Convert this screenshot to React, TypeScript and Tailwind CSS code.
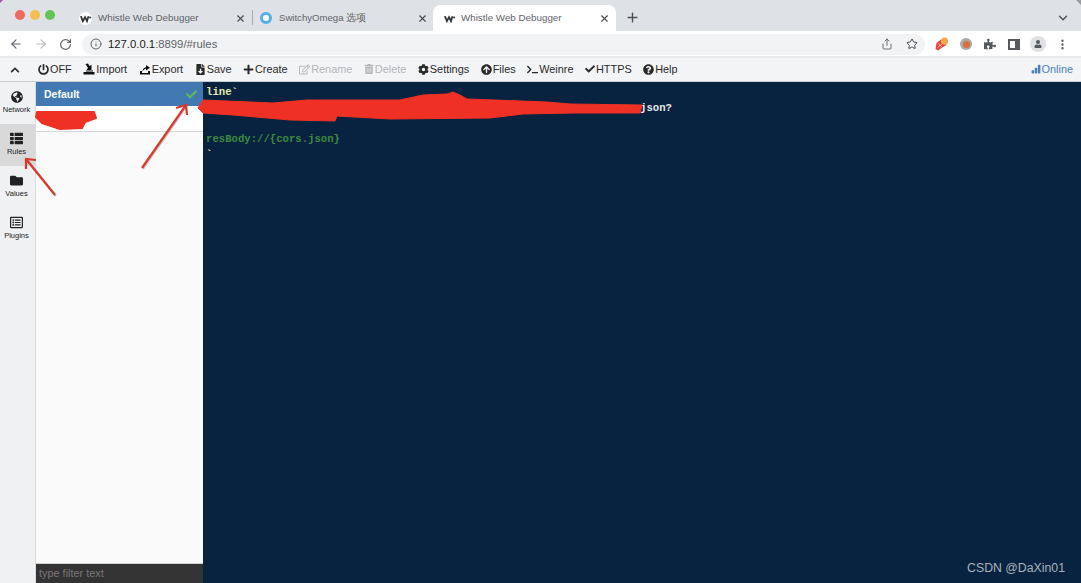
import React from 'react';
import { ArrowLeft, ArrowRight, ChevronDown, Info, MoreVertical, Plus, RotateCw, Share, Star, X } from 'lucide-react';
import {
  FaCheck,
  FaChevronUp,
  FaCog,
  FaFolder,
  FaGlobeAmericas,
  FaPuzzlePiece,
  FaQuestionCircle,
  FaRegEdit,
  FaThList,
  FaTrashAlt,
  FaUser,
  FaArrowCircleUp,
  FaPlus,
  FaPowerOff,
  FaTerminal,
  FaFileDownload,
  FaRegListAlt,
} from 'react-icons/fa';
import { BsBarChartFill } from 'react-icons/bs';

const WhistleIcon = () => (
  <svg width="13" height="13" viewBox="0 0 14 14" className="shrink-0">
    <circle cx="7" cy="7" r="7" fill="#fff" />
    <path d="M2 4.5 L4.2 9.8 L6.5 5.5 L8.6 9.8 L10.2 4.5" fill="none" stroke="#333" strokeWidth="1.9" />
    <circle cx="12" cy="6" r="1.1" fill="#333" />
  </svg>
);

const TrayIcon = ({ up }: { up?: boolean }) => (
  <svg width="12" height="12" viewBox="0 0 12 12" className="shrink-0" fill="#111">
    {up ? (
      <>
        <path d="M1 8 H3 V10 H9 V8 H11 V11.5 H1 Z" />
        <path d="M3.5 8.5 C3.8 6 5 4.6 7 4.3 V2 L11 4.8 L7 7.6 V5.8 C5.6 6 4.6 7 3.5 8.5 Z" />
      </>
    ) : (
      <>
        <rect x="0.5" y="9" width="11" height="2.5" />
        <path d="M3 7.5 H10 V8.5 H3 Z" />
        <path d="M2.5 1 L5 0.5 L6.5 3 L8.5 1.8 L8.5 7 L3.5 7 L5 5 Z" />
      </>
    )}
  </svg>
);

const BouquetIcon = () => (
  <svg width="14" height="14" viewBox="0 0 14 14" className="shrink-0">
    <path d="M0.5 12 L1.5 6 L6 2.5 L11.5 8 L6.5 11 L3 13.5 Z" fill="#e8473f" />
    <circle cx="9.5" cy="4.2" r="3.6" fill="#f0a94c" />
    <path d="M2.5 10.5 L7 7 M3.5 6.5 L6.5 10" stroke="#f7c2bd" strokeWidth="0.8" />
  </svg>
);

const tools = [
  { label: 'OFF', icon: <FaPowerOff size={11} /> },
  { label: 'Import', icon: <TrayIcon /> },
  { label: 'Export', icon: <TrayIcon up /> },
  { label: 'Save', icon: <FaFileDownload size={11} /> },
  { label: 'Create', icon: <FaPlus size={11} /> },
  { label: 'Rename', icon: <FaRegEdit size={11} />, disabled: true },
  { label: 'Delete', icon: <FaTrashAlt size={10} />, disabled: true },
  { label: 'Settings', icon: <FaCog size={11} /> },
  { label: 'Files', icon: <FaArrowCircleUp size={11} /> },
  { label: 'Weinre', icon: <FaTerminal size={11} /> },
  { label: 'HTTPS', icon: <FaCheck size={10} /> },
  { label: 'Help', icon: <FaQuestionCircle size={11} /> },
];

const sideItems = [
  { label: 'Network', icon: <FaGlobeAmericas size={12} /> },
  { label: 'Rules', icon: <FaThList size={13} />, active: true },
  { label: 'Values', icon: <FaFolder size={13} /> },
  { label: 'Plugins', icon: <FaRegListAlt size={13} /> },
];

export default function App() {
  return (
    <div className="relative flex h-[583px] w-[1081px] flex-col overflow-hidden bg-white font-['Liberation_Sans',sans-serif]">
      {/* tab strip */}
      <div className="flex h-[31px] shrink-0 items-end bg-[#dee1e6] pl-[70px]">
        <div className="flex h-[26px] w-[182px] items-center pl-[9px] pr-[6px]">
          <WhistleIcon />
          <span className="ml-[6px] flex-1 truncate text-[9.8px] text-[#5f6368]">Whistle Web Debugger</span>
          <X size={11} className="text-[#4b4f54]" strokeWidth={2.5} />
        </div>
        <div className="mb-[6px] h-[15px] w-px bg-[#a9adb3]" />
        <div className="flex h-[26px] w-[180px] items-center pl-[7px] pr-[5px]">
          <span className="h-[12px] w-[12px] shrink-0 rounded-full border-[3px] border-[#56aee6] bg-white" />
          <span className="ml-[7px] flex-1 truncate text-[9.6px] text-[#5f6368]">SwitchyOmega 选项</span>
          <X size={11} className="text-[#4b4f54]" strokeWidth={2.5} />
        </div>
        <div className="flex h-[26px] w-[183px] items-center rounded-t-lg bg-white pl-[10px] pr-[6px]">
          <WhistleIcon />
          <span className="ml-[5px] flex-1 truncate text-[9.8px] text-[#5f6368]">Whistle Web Debugger</span>
          <X size={11} className="text-[#4b4f54]" strokeWidth={2.5} />
        </div>
        <Plus size={15} className="mb-[6px] ml-[9px] text-[#4b4f54]" strokeWidth={2.2} />
        <div className="flex-1" />
        <ChevronDown size={14} className="mb-[6px] mr-[11px] text-[#4b4f54]" strokeWidth={2.4} />
      </div>

      {/* browser toolbar */}
      <div className="flex h-[27px] shrink-0 items-center border-b-2 border-[#e8eaed] bg-white pl-[9px] pr-[10px] pt-[1px] text-[#5f6368]">
        <ArrowLeft size={14} strokeWidth={2} />
        <ArrowRight size={14} strokeWidth={2} className="ml-[11px] text-[#b9bcc0]" />
        <RotateCw size={13} strokeWidth={2.2} className="ml-[11px]" />
        <div className="ml-[10px] flex h-[21px] w-[843px] items-center rounded-full bg-[#f1f3f4] pl-[8px] pr-[7px]">
          <Info size={12} strokeWidth={2} />
          <span className="ml-[6px] text-[11.3px] text-[#202124]">127.0.0.1</span>
          <span className="text-[11.3px] text-[#5f6368]">:8899/#rules</span>
          <div className="flex-1" />
          <Share size={12} strokeWidth={1.8} />
          <Star size={12} strokeWidth={2} className="ml-[13px] text-[#44474b]" />
        </div>
        <span className="ml-[10px]">
          <BouquetIcon />
        </span>
        <span className="ml-[11px] flex h-[12px] w-[12px] shrink-0 items-center justify-center rounded-full bg-[#a9a9a9]">
          <span className="h-[7px] w-[7px] rounded-full bg-[#d9703a]" />
        </span>
        <FaPuzzlePiece size={12} className="ml-[12px] text-[#55585c]" />
        <span className="ml-[12px] h-[11px] w-[12px] shrink-0 border-2 border-r-[5px] border-[#55585c] bg-white" />
        <span className="ml-[10px] flex h-[16px] w-[16px] shrink-0 items-center justify-center rounded-full bg-[#dfe1e5]">
          <FaUser size={8} className="text-[#55585c]" />
        </span>
        <MoreVertical size={13} strokeWidth={2.5} className="ml-[10px]" />
      </div>

      {/* whistle menu */}
      <div className="flex h-[24px] shrink-0 items-center border-b border-[#c9ccd0] bg-[#f3f4f6] pl-[10px] pr-[8px] text-[10.9px] text-[#2a2a2a]">
        <FaChevronUp size={10} />
        <div className="ml-[18px] flex items-center gap-[11.5px]">
          {tools.map((t) => (
            <div key={t.label} className={t.disabled ? 'flex items-center gap-[1px] text-[#b4b6b8]' : 'flex items-center gap-[1px]'}>
              {t.icon}
              <span>{t.label}</span>
            </div>
          ))}
        </div>
        <div className="flex-1" />
        <div className="flex items-center gap-[1px] text-[#4a7fb8]">
          <BsBarChartFill size={10} />
          <span>Online</span>
        </div>
      </div>

      <div className="flex min-h-0 flex-1">
        {/* left nav */}
        <div className="w-[36px] shrink-0 border-r border-[#d9dbde] bg-[#f0f1f3]">
          {sideItems.map((s) => (
            <div
              key={s.label}
              className={
                s.active
                  ? 'flex h-[42px] flex-col items-center justify-center gap-[2px] bg-[#d9d9d9] pb-[1px] pr-[2px] text-[#222]'
                  : 'flex h-[42px] flex-col items-center justify-center gap-[2px] pb-[1px] pr-[2px] text-[#222]'
              }
            >
              {s.icon}
              <span className="text-[7.5px] leading-[10px]">{s.label}</span>
            </div>
          ))}
        </div>

        {/* rule list */}
        <div className="flex w-[167px] shrink-0 flex-col bg-[#fafafa]">
          <div className="flex h-[24px] shrink-0 items-center justify-between bg-[#4279b3] pl-[8px] pr-[6px] pt-[1px] text-[10.5px] font-bold text-white">
            <span>Default</span>
            <FaCheck size={11} className="text-[#5fb760]" />
          </div>
          <div className="h-[26px] shrink-0 border-b border-[#d8d8d8] bg-white" />
          <div className="flex-1" />
          <div className="flex h-[20px] shrink-0 items-center border-t border-[#cfcfcf] bg-[#333] pl-[3px] text-[10.9px] text-[#777]">
            type filter text
          </div>
        </div>

        {/* editor */}
        <div className="relative flex-1 bg-[#08233f] pl-[3px] pt-[3px] font-['Liberation_Mono',monospace] text-[10.63px] font-bold leading-[15.5px]">
          <div className="text-[#e8e6a8]">line`</div>
          <div className="ml-[434px] text-[#e8e8e8]">json?</div>
          <div className="h-[15.5px]" />
          <div className="text-[#3b8a40]">{'resBody://{cors.json}'}</div>
          <div className="text-[#e8e6a8]">`</div>
          <div className="absolute bottom-[7px] right-[16px] font-['Liberation_Sans',sans-serif] text-[12.3px] font-normal text-[#a9b2bc]">
            CSDN @DaXin01
          </div>
        </div>
      </div>

      {/* window controls */}
      <div className="absolute left-[15px] top-[10px] flex gap-[5px]">
        <span className="h-[10px] w-[10px] rounded-full bg-[#ed6a5e]" />
        <span className="h-[10px] w-[10px] rounded-full bg-[#f4bf4f]" />
        <span className="h-[10px] w-[10px] rounded-full bg-[#61c554]" />
      </div>

      {/* red markup and capture corners drawn over the screenshot */}
      <svg className="pointer-events-none absolute left-0 top-0" width="1081" height="583" viewBox="0 0 1081 583">
        <path d="M0 0 H3 L0 3 Z" fill="#a54fb0" />
        <path d="M1076 0 H1081 V5 Z" fill="#9a9ca0" />
        <path
          d="M203 100 L273 103 L307 100 L400 100 L423 95 L447 94 L453 92 L460 95 L467 99 L547 102 L570 104 L642 105 L640 113 L573 113 L523 114 L490 118 L390 119 L337 116 L335 121 L290 120 L233 115 L203 113 L198 108 Z"
          fill="#ee3124"
          stroke="#ee3124"
          strokeLinejoin="round"
        />
        <path d="M37 112 L94 112 L96 118 L85 122 L82 128 L60 129 L42 123 L36 117 Z" fill="#ee3124" stroke="#ee3124" strokeWidth="2" strokeLinejoin="round" />
        <g fill="none" stroke="#00000033" strokeWidth="2">
          <path d="M56 196 L27 160" />
          <path d="M143 169 L187 106" />
        </g>
        <g fill="none" stroke="#d8392c" strokeWidth="2.2">
          <path d="M55 195 L26 159" />
          <path d="M26 169 L26 159 L36 160" />
          <path d="M142 168 L186 105" />
          <path d="M176 108 L186 105 L187 115" />
        </g>
      </svg>
    </div>
  );
}
